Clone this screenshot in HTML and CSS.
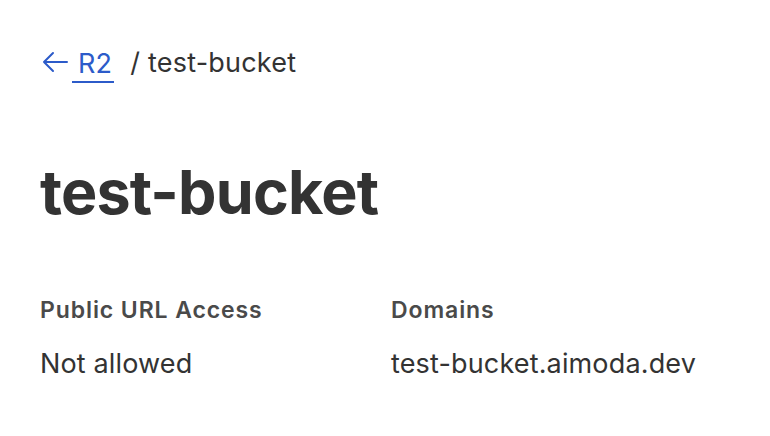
FILE: index.html
```html
<!DOCTYPE html>
<html lang="en">
<head>
    <meta charset="UTF-8">
    <title>test-bucket</title>
    <link rel="stylesheet" href="styles.css">
</head>
<body>
    <div class="page">
        <nav class="breadcrumb">
            <svg class="back-icon" width="26" height="22" viewBox="0 0 26 22" fill="none" stroke="#2c5bc9" stroke-width="2" stroke-linecap="round" stroke-linejoin="round">
                <path d="M25 11H2M11 2L2 11l9 9"/>
            </svg>
            <a class="crumb-link" href="#">R2</a>
            <span class="crumb-sep">/ test-bucket</span>
        </nav>

        <h1 class="title">test-bucket</h1>

        <div class="details">
            <div class="detail">
                <div class="detail-label">Public URL Access</div>
                <div class="detail-value">Not allowed</div>
            </div>
            <div class="detail">
                <div class="detail-label">Domains</div>
                <div class="detail-value">test-bucket.aimoda.dev</div>
            </div>
        </div>
    </div>
</body>
</html>
```

FILE: styles.css
```css
body {
    font-family: 'Inter', 'Noto Sans', sans-serif;
    background-color: #fff;
    color: #333;
    margin: 0;
}

.page {
    padding: 44px 40px 0 40px;
}

.breadcrumb {
    display: flex;
    align-items: center;
    font-size: 27px;
    height: 36px;
    letter-spacing: 0.2px;
}

.back-icon {
    margin-left: 2px;
    margin-right: 4px;
}

.crumb-link {
    color: #2c5bc9;
    text-decoration: none;
    border-bottom: 2px solid #2c5bc9;
    padding: 0 2px 0 6px;
    line-height: 34px;
    margin-top: 6px;
}

.crumb-sep {
    margin-left: 16px;
    color: #333;
}

.title {
    font-size: 61px;
    font-weight: 700;
    margin: 76px 0 0 0;
    line-height: 72px;
    letter-spacing: -0.8px;
}

.details {
    display: flex;
    margin-top: 68px;
}

.detail {
    flex: none;
    width: 351px;
}

.detail + .detail {
    width: auto;
}

.detail-label {
    font-size: 23px;
    font-weight: 600;
    color: #4a4a4a;
    letter-spacing: 0.9px;
}

.detail-value {
    font-size: 27px;
    margin-top: 23px;
    letter-spacing: 0.15px;
}
```
